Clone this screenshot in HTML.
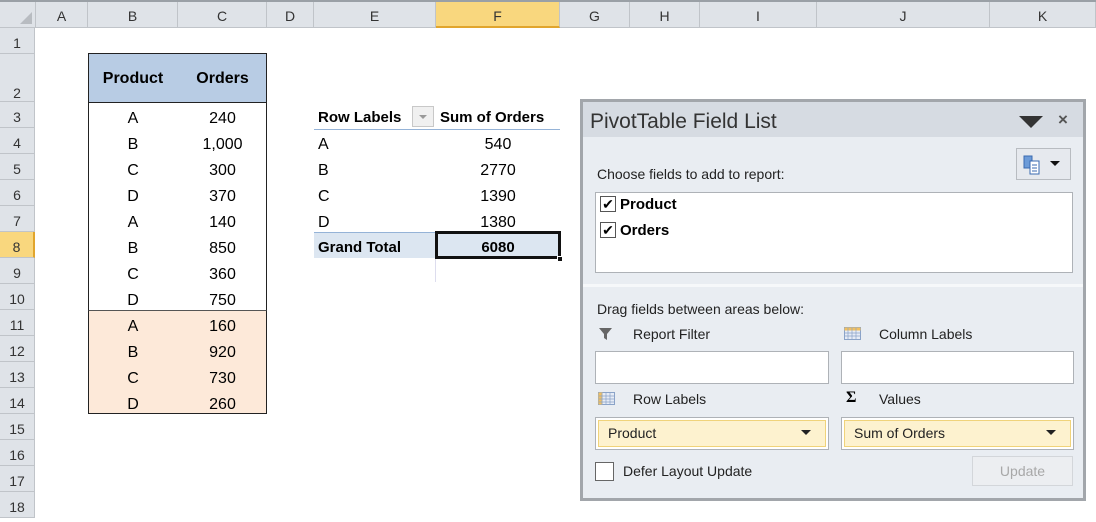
<!DOCTYPE html>
<html><head><style>
*{margin:0;padding:0;box-sizing:border-box}
body{width:1096px;height:516px;overflow:hidden;background:#fff;font-family:"Liberation Sans",sans-serif;position:relative;color:#000}
.a{position:absolute}
.ch{position:absolute;top:2px;height:26px;background:#dfe3e8;border-right:1px solid #c0c4c9;border-bottom:1px solid #c0c4c9;font-size:14px;color:#333;text-align:center;line-height:28px}
.rh{position:absolute;left:0;width:35px;background:#dfe3e8;border-bottom:1px solid #c0c4c9;border-right:1px solid #c0c4c9;font-size:14px;color:#333;text-align:center}
.c{position:absolute;font-size:16px;text-align:center;height:26px;line-height:26px}
.p{position:absolute;font-size:14px;color:#222}
</style></head><body>
<div class="a" style="left:0;top:0;width:1096px;height:2px;background:#9aa0a6"></div>
<div class="ch" style="left:0;width:36px"></div>
<div class="a" style="left:20px;top:12px;width:0;height:0;border-left:12px solid transparent;border-bottom:12px solid #b8bcc1"></div>
<div class="ch" style="left:36px;width:52px">A</div>
<div class="ch" style="left:88px;width:90px">B</div>
<div class="ch" style="left:178px;width:89px">C</div>
<div class="ch" style="left:267px;width:47px">D</div>
<div class="ch" style="left:314px;width:122px">E</div>
<div class="ch" style="left:436px;width:124px;background:#f9d77e;border-bottom:2px solid #e1a52d">F</div>
<div class="ch" style="left:560px;width:70px">G</div>
<div class="ch" style="left:630px;width:70px">H</div>
<div class="ch" style="left:700px;width:117px">I</div>
<div class="ch" style="left:817px;width:173px">J</div>
<div class="ch" style="left:990px;width:106px">K</div>

<div class="rh" style="top:28px;height:26px;line-height:31px">1</div>
<div class="rh" style="top:54px;height:48px;line-height:78px">2</div>
<div class="rh" style="top:102px;height:26px;line-height:30px">3</div>
<div class="rh" style="top:128px;height:26px;line-height:30px">4</div>
<div class="rh" style="top:154px;height:26px;line-height:30px">5</div>
<div class="rh" style="top:180px;height:26px;line-height:30px">6</div>
<div class="rh" style="top:206px;height:26px;line-height:30px">7</div>
<div class="rh" style="top:232px;height:26px;line-height:30px;background:#f9d77e;border-right:2px solid #e1a52d">8</div>
<div class="rh" style="top:258px;height:26px;line-height:30px">9</div>
<div class="rh" style="top:284px;height:26px;line-height:30px">10</div>
<div class="rh" style="top:310px;height:26px;line-height:30px">11</div>
<div class="rh" style="top:336px;height:26px;line-height:30px">12</div>
<div class="rh" style="top:362px;height:26px;line-height:30px">13</div>
<div class="rh" style="top:388px;height:26px;line-height:30px">14</div>
<div class="rh" style="top:414px;height:26px;line-height:30px">15</div>
<div class="rh" style="top:440px;height:26px;line-height:30px">16</div>
<div class="rh" style="top:466px;height:26px;line-height:30px">17</div>
<div class="rh" style="top:492px;height:26px;line-height:30px">18</div>

<!-- source table -->
<div class="a" style="left:88px;top:53px;width:179px;height:50px;background:#b8cce4;border:1px solid #222"></div>
<div class="a" style="left:88px;top:102px;width:179px;height:209px;border:1px solid #222;border-top:none"></div>
<div class="a" style="left:88px;top:310px;width:179px;height:104px;background:#fde9d9;border:1px solid #222;border-top:1px solid #555"></div>
<div class="c" style="left:88px;top:66px;width:90px;font-weight:bold">Product</div>
<div class="c" style="left:178px;top:66px;width:89px;font-weight:bold">Orders</div>
<div class="c" style="left:88px;top:106px;width:90px">A</div><div class="c" style="left:178px;top:106px;width:89px">240</div>
<div class="c" style="left:88px;top:132px;width:90px">B</div><div class="c" style="left:178px;top:132px;width:89px">1,000</div>
<div class="c" style="left:88px;top:158px;width:90px">C</div><div class="c" style="left:178px;top:158px;width:89px">300</div>
<div class="c" style="left:88px;top:184px;width:90px">D</div><div class="c" style="left:178px;top:184px;width:89px">370</div>
<div class="c" style="left:88px;top:210px;width:90px">A</div><div class="c" style="left:178px;top:210px;width:89px">140</div>
<div class="c" style="left:88px;top:236px;width:90px">B</div><div class="c" style="left:178px;top:236px;width:89px">850</div>
<div class="c" style="left:88px;top:262px;width:90px">C</div><div class="c" style="left:178px;top:262px;width:89px">360</div>
<div class="c" style="left:88px;top:288px;width:90px">D</div><div class="c" style="left:178px;top:288px;width:89px">750</div>
<div class="c" style="left:88px;top:314px;width:90px">A</div><div class="c" style="left:178px;top:314px;width:89px">160</div>
<div class="c" style="left:88px;top:340px;width:90px">B</div><div class="c" style="left:178px;top:340px;width:89px">920</div>
<div class="c" style="left:88px;top:366px;width:90px">C</div><div class="c" style="left:178px;top:366px;width:89px">730</div>
<div class="c" style="left:88px;top:392px;width:90px">D</div><div class="c" style="left:178px;top:392px;width:89px">260</div>

<!-- pivot -->
<div class="a" style="left:314px;top:129px;width:246px;height:1px;background:#95b3d7"></div>
<div class="c" style="left:318px;top:105px;font-weight:bold;font-size:15px;text-align:left">Row Labels</div>
<div class="a" style="left:412px;top:106px;width:22px;height:21px;background:#f0f0f0;border:1px solid #c8c8c8"></div>
<div class="a" style="left:419px;top:115px;border-left:4px solid transparent;border-right:4px solid transparent;border-top:4px solid #999"></div>
<div class="c" style="left:440px;top:105px;font-weight:bold;font-size:15px;text-align:left">Sum of Orders</div>
<div class="c" style="left:318px;top:132px;text-align:left">A</div><div class="c" style="left:436px;top:132px;width:124px">540</div>
<div class="c" style="left:318px;top:158px;text-align:left">B</div><div class="c" style="left:436px;top:158px;width:124px">2770</div>
<div class="c" style="left:318px;top:184px;text-align:left">C</div><div class="c" style="left:436px;top:184px;width:124px">1390</div>
<div class="c" style="left:318px;top:210px;text-align:left">D</div><div class="c" style="left:436px;top:210px;width:124px">1380</div>
<div class="a" style="left:314px;top:232px;width:246px;height:26px;background:#dce6f1;border-top:1px solid #95b3d7"></div>
<div class="a" style="left:435px;top:258px;width:1px;height:24px;background:#dde"></div>
<div class="c" style="left:318px;top:235px;text-align:left;font-weight:bold;font-size:15px">Grand Total</div>
<div class="c" style="left:436px;top:235px;width:124px;font-weight:bold;font-size:15px">6080</div>
<div class="a" style="left:435px;top:231px;width:126px;height:28px;border:3px solid #111"></div>
<div class="a" style="left:557px;top:256px;width:6px;height:6px;background:#111;border:1px solid #fff"></div>

<!-- panel -->
<div class="a" style="left:580px;top:99px;width:506px;height:402px;background:#e9edf2;border:3px solid #a2a6ab"></div>
<div class="a" style="left:583px;top:102px;width:500px;height:35px;background:#d6dbe2"></div>
<div class="a" style="left:590px;top:110px;font-size:21px;color:#333">PivotTable Field List</div>
<div class="a" style="left:1019px;top:116px;border-left:12px solid transparent;border-right:12px solid transparent;border-top:12px solid #333"></div>
<div class="a" style="left:1058px;top:110px;font-size:17px;color:#555;font-weight:bold">×</div>
<div class="a" style="left:1016px;top:148px;width:55px;height:32px;background:#e6e9ee;border:1px solid #b8bcc1"></div>
<svg class="a" style="left:1022px;top:154px" width="20" height="22"><rect x="2" y="2" width="8" height="12" fill="#6c9bd8" stroke="#3a6ab0"/><rect x="8" y="7" width="9" height="13" fill="#fff" stroke="#3a6ab0"/><path d="M10 11h5M10 14h5M10 17h5" stroke="#3a6ab0"/></svg>
<div class="a" style="left:1050px;top:161px;border-left:5px solid transparent;border-right:5px solid transparent;border-top:5px solid #111"></div>
<div class="p" style="left:597px;top:166px">Choose fields to add to report:</div>
<div class="a" style="left:595px;top:192px;width:478px;height:81px;background:#fff;border:1px solid #aeb2b7"></div>
<div class="a" style="left:600px;top:196px;width:16px;height:16px;border:1px solid #555;background:#fff;font-size:14px;line-height:14px;text-align:center">✔</div>
<div class="a" style="left:620px;top:196px;font-size:15px;font-weight:bold">Product</div>
<div class="a" style="left:600px;top:222px;width:16px;height:16px;border:1px solid #555;background:#fff;font-size:14px;line-height:14px;text-align:center">✔</div>
<div class="a" style="left:620px;top:222px;font-size:15px;font-weight:bold">Orders</div>
<div class="a" style="left:583px;top:284px;width:500px;height:3px;background:#f6f8fa"></div>
<div class="p" style="left:597px;top:301px">Drag fields between areas below:</div>
<svg class="a" style="left:598px;top:327px" width="16" height="14"><path d="M1 1h13l-5 6v6l-3-2v-4z" fill="#666"/></svg>
<div class="p" style="left:633px;top:326px">Report Filter</div>
<svg class="a" style="left:844px;top:327px" width="18" height="14"><rect x="0.5" y="0.5" width="16" height="12" fill="#e6ecf6" stroke="#8aa3c8"/><rect x="0.5" y="0.5" width="16" height="3" fill="#f2c060"/><path d="M4 1v12M8 1v12M12 1v12M1 6h16M1 9h16" stroke="#8aa3c8" stroke-width=".7"/></svg>
<div class="p" style="left:879px;top:326px">Column Labels</div>
<div class="a" style="left:595px;top:351px;width:234px;height:33px;background:#fff;border:1px solid #aeb2b7"></div>
<div class="a" style="left:841px;top:351px;width:233px;height:33px;background:#fff;border:1px solid #aeb2b7"></div>
<svg class="a" style="left:598px;top:392px" width="18" height="14"><rect x="0.5" y="0.5" width="16" height="12" fill="#e6ecf6" stroke="#8aa3c8"/><rect x="0.5" y="0.5" width="4" height="12" fill="#f2c060"/><path d="M4 1v12M8 1v12M12 1v12M1 4h16M1 7h16M1 10h16" stroke="#8aa3c8" stroke-width=".7"/></svg>
<div class="p" style="left:633px;top:391px">Row Labels</div>
<div class="a" style="left:846px;top:389px;font-size:16px;font-weight:bold;font-family:'Liberation Serif',serif">Σ</div>
<div class="p" style="left:879px;top:391px">Values</div>
<div class="a" style="left:595px;top:417px;width:234px;height:33px;background:#fff;border:1px solid #aeb2b7"></div>
<div class="a" style="left:598px;top:420px;width:228px;height:27px;background:#fdf2cf;border:1px solid #f0d37a"></div>
<div class="p" style="left:608px;top:425px">Product</div>
<div class="a" style="left:801px;top:430px;border-left:5px solid transparent;border-right:5px solid transparent;border-top:5px solid #222"></div>
<div class="a" style="left:841px;top:417px;width:233px;height:33px;background:#fff;border:1px solid #aeb2b7"></div>
<div class="a" style="left:844px;top:420px;width:227px;height:27px;background:#fdf2cf;border:1px solid #f0d37a"></div>
<div class="p" style="left:854px;top:425px">Sum of Orders</div>
<div class="a" style="left:1046px;top:430px;border-left:5px solid transparent;border-right:5px solid transparent;border-top:5px solid #222"></div>
<div class="a" style="left:595px;top:462px;width:19px;height:19px;background:#fff;border:1px solid #666"></div>
<div class="p" style="left:623px;top:463px">Defer Layout Update</div>
<div class="a" style="left:972px;top:456px;width:101px;height:30px;background:#eceef1;border:1px solid #d3d6da;color:#a8a8a8;font-size:14px;text-align:center;line-height:28px">Update</div>
</body></html>
